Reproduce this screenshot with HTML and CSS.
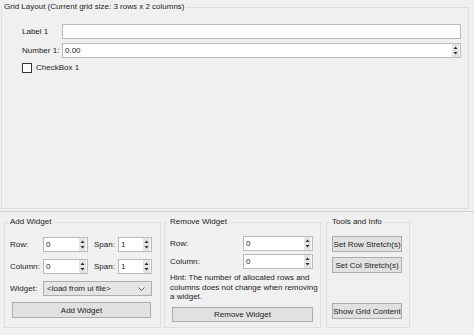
FILE: index.html
```html
<!DOCTYPE html>
<html>
<head>
<meta charset="utf-8">
<link rel="stylesheet" href="styles.css">
</head>
<body>
<div class="win">
  <div class="group top-group">
    <div class="gtitle">Grid Layout (Current grid size: 3 rows x 2 columns)</div>
    <div class="form">
      <div class="lbl">Label 1</div>
      <div class="edit"></div>
      <div class="lbl">Number 1:</div>
      <div class="spin"><span class="val">0.00</span><svg class="arr" width="7" height="13" viewBox="0 0 7 13"><rect width="7" height="13" fill="#e4e4e4"/><path d="M1.5 5 L3.5 2.5 L5.5 5 Z M1.5 8 L5.5 8 L3.5 10.5 Z" fill="#333"/></svg></div>
    </div>
    <div class="check"><span class="cbox"></span><span>CheckBox 1</span></div>
  </div>
  <div class="sep"></div>
  <div class="bottom">
    <div class="group g-add">
      <div class="gtitle">Add Widget</div>
      <div class="gbody">
        <div class="arow">
          <span class="alabel">Row:</span>
          <div class="spin w45"><span class="val">0</span><svg class="arr" width="7" height="13" viewBox="0 0 7 13"><rect width="7" height="13" fill="#e4e4e4"/><path d="M1.5 5 L3.5 2.5 L5.5 5 Z M1.5 8 L5.5 8 L3.5 10.5 Z" fill="#333"/></svg></div>
          <span class="slabel">Span:</span>
          <div class="spin w34"><span class="val">1</span><svg class="arr" width="7" height="13" viewBox="0 0 7 13"><rect width="7" height="13" fill="#e4e4e4"/><path d="M1.5 5 L3.5 2.5 L5.5 5 Z M1.5 8 L5.5 8 L3.5 10.5 Z" fill="#333"/></svg></div>
        </div>
        <div class="arow gap7">
          <span class="alabel">Column:</span>
          <div class="spin w45"><span class="val">0</span><svg class="arr" width="7" height="13" viewBox="0 0 7 13"><rect width="7" height="13" fill="#e4e4e4"/><path d="M1.5 5 L3.5 2.5 L5.5 5 Z M1.5 8 L5.5 8 L3.5 10.5 Z" fill="#333"/></svg></div>
          <span class="slabel">Span:</span>
          <div class="spin w34"><span class="val">1</span><svg class="arr" width="7" height="13" viewBox="0 0 7 13"><rect width="7" height="13" fill="#e4e4e4"/><path d="M1.5 5 L3.5 2.5 L5.5 5 Z M1.5 8 L5.5 8 L3.5 10.5 Z" fill="#333"/></svg></div>
        </div>
        <div class="arow gap7">
          <span class="alabel">Widget:</span>
          <div class="combo"><span class="ctext">&lt;load from ui file&gt;</span><svg width="7" height="4" viewBox="0 0 7 4"><polyline points="0.5,0.5 3.5,3.5 6.5,0.5" fill="none" stroke="#666" stroke-width="1"/></svg></div>
        </div>
        <div class="btn add-btn">Add Widget</div>
      </div>
    </div>
    <div class="group g-rem">
      <div class="gtitle">Remove Widget</div>
      <div class="gbody rbody">
        <div class="arow">
          <span class="rlabel">Row:</span>
          <div class="spin w70"><span class="val">0</span><svg class="arr" width="7" height="13" viewBox="0 0 7 13"><rect width="7" height="13" fill="#e4e4e4"/><path d="M1.5 5 L3.5 2.5 L5.5 5 Z M1.5 8 L5.5 8 L3.5 10.5 Z" fill="#333"/></svg></div>
        </div>
        <div class="arow gap3">
          <span class="rlabel">Column:</span>
          <div class="spin w70"><span class="val">0</span><svg class="arr" width="7" height="13" viewBox="0 0 7 13"><rect width="7" height="13" fill="#e4e4e4"/><path d="M1.5 5 L3.5 2.5 L5.5 5 Z M1.5 8 L5.5 8 L3.5 10.5 Z" fill="#333"/></svg></div>
        </div>
        <div class="hint">Hint: The number of allocated rows and<br>columns does not change when removing<br>a widget.</div>
        <div class="btn rem-btn">Remove Widget</div>
      </div>
    </div>
    <div class="group g-tools">
      <div class="gtitle">Tools and Info</div>
      <div class="gbody tbody">
        <div class="btn tbtn">Set Row Stretch(s)</div>
        <div class="btn tbtn t2">Set Col Stretch(s)</div>
        <div class="btn tbtn t3">Show Grid Content</div>
      </div>
    </div>
  </div>
</div>
</body>
</html>
```

FILE: styles.css
```css
html, body {
  margin: 0;
  padding: 0;
}
body {
  width: 474px;
  height: 335px;
  overflow: hidden;
  background: #f0f0f0;
  font-family: "Liberation Sans", Arial, sans-serif;
  font-size: 8px;
  color: #222;
}
.win {
  padding-top: 7px;
}
.group {
  border: 1px solid #dedede;
  box-sizing: border-box;
}
.gtitle {
  width: fit-content;
  margin: -7px 0 0 3px;
  padding: 0 2px;
  line-height: 12px;
  background: #f0f0f0;
  white-space: nowrap;
}
.top-group {
  margin-left: 1px;
  width: 468px;
  height: 202px;
}
.top-group .gtitle {
  margin-left: 0;
}
.form {
  display: grid;
  grid-template-columns: 40px 1fr;
  grid-auto-rows: 15px;
  row-gap: 4px;
  align-items: center;
  margin: 11px 7px 0 20px;
}
.lbl {
  white-space: nowrap;
}
.edit {
  height: 15px;
  box-sizing: border-box;
  border: 1px solid #bababa;
  background: #fff;
}
.spin {
  display: flex;
  align-items: center;
  height: 15px;
  box-sizing: border-box;
  border: 1px solid #bababa;
  background: #fff;
}
.spin .val {
  flex: 1;
  padding-left: 2px;
  line-height: 13px;
}
.spin .arr {
  display: block;
  margin-right: 1px;
}
.check {
  display: flex;
  align-items: center;
  gap: 4px;
  margin: 5px 0 0 20px;
  line-height: 10px;
}
.cbox {
  width: 10px;
  height: 10px;
  box-sizing: border-box;
  border: 1px solid #333;
  background: #fff;
}
.sep {
  margin-top: 2px;
  height: 1px;
  background: #d0d0d0;
}
.bottom {
  display: flex;
  align-items: flex-start;
  padding-top: 10px;
}
.g-add {
  margin-left: 4px;
  width: 157px;
  height: 106px;
}
.g-rem {
  margin-left: 3px;
  width: 157px;
  height: 106px;
}
.g-tools {
  margin-left: 5px;
  width: 84px;
  height: 106px;
}
.gbody {
  padding: 9px 0 0 5px;
}
.arow {
  display: flex;
  align-items: center;
  height: 15px;
}
.gap7 {
  margin-top: 7px;
}
.gap3 {
  margin-top: 3px;
}
.alabel {
  width: 33px;
  white-space: nowrap;
}
.slabel {
  width: 24px;
  margin-left: 6px;
  white-space: nowrap;
}
.w45 { width: 45px; }
.w34 { width: 34px; }
.w70 { width: 70px; }
.combo {
  display: flex;
  align-items: center;
  justify-content: space-between;
  width: 109px;
  height: 15px;
  box-sizing: border-box;
  border: 1px solid #adadad;
  background: #e5e5e5;
  padding: 0 6px 0 3px;
}
.ctext {
  white-space: nowrap;
}
.btn {
  display: flex;
  align-items: center;
  justify-content: center;
  box-sizing: border-box;
  border: 1px solid #adadad;
  background: #e1e1e1;
  white-space: nowrap;
}
.add-btn {
  margin: 6px 0 0 2px;
  width: 139px;
  height: 16px;
}
.rbody {
  padding-top: 8px;
}
.rlabel {
  width: 73px;
}
.hint {
  margin-top: 4px;
  line-height: 9.5px;
  white-space: nowrap;
}
.rem-btn {
  margin: 5px 0 0 2px;
  width: 141px;
  height: 15px;
}
.tbody {
  padding-top: 8px;
}
.tbtn {
  width: 70px;
  height: 16px;
}
.t2 {
  margin-top: 5px;
}
.t3 {
  margin-top: 30px;
}
```
